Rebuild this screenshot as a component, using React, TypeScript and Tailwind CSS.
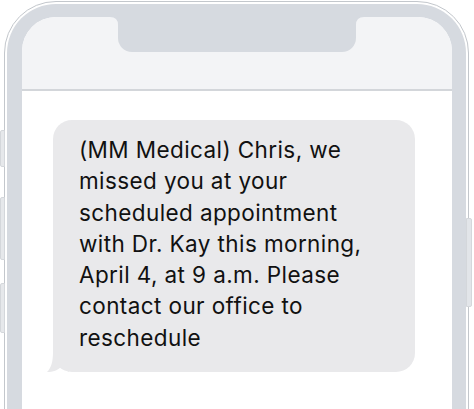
import React from "react";

const lines = [
  "(MM Medical) Chris, we",
  "missed you at your",
  "scheduled appointment",
  "with Dr. Kay this morning,",
  "April 4, at 9 a.m. Please",
  "contact our office to",
  "reschedule",
];

export default function App() {
  return (
    <div className="relative h-[409px] w-[474px] overflow-hidden bg-white" style={{ fontFamily: "Inter, 'Liberation Sans', sans-serif" }}>
      {/* side buttons */}
      <div className="absolute left-0 top-[130px] h-[37px] w-[5px] rounded-l-[2px] border border-[#d4d7db] bg-[#e6e8eb]" />
      <div className="absolute left-0 top-[197px] h-[63px] w-[5px] rounded-l-[2px] border border-[#d4d7db] bg-[#e6e8eb]" />
      <div className="absolute left-0 top-[283px] h-[50px] w-[5px] rounded-l-[2px] border border-[#d4d7db] bg-[#e6e8eb]" />
      <div className="absolute right-[2px] top-[218px] h-[89px] w-[6px] rounded-r-[2px] border border-[#d4d7db] bg-[#e2e5e9]" />

      <div className="ml-[4px] mt-[1px] flex h-[420px] w-[465px] flex-col rounded-t-[52px] border border-[#c3c7cc] bg-white p-[2px]">
        <div className="flex flex-1 flex-col rounded-t-[49px] bg-[#d6dae0] pl-[15px] pr-[14px] pt-[13px]">
          <div className="flex flex-1 flex-col overflow-hidden rounded-t-[34px] bg-white">
            {/* header */}
            <div className="relative flex h-[74px] justify-center border-b-2 border-[#d3d6da] bg-[#f3f4f6]">
              <div className="h-[35px] w-[238px] rounded-b-[14px] bg-[#d6dae0]" />
              <svg className="absolute left-[88px] top-0" width="8" height="8" viewBox="0 0 8 8">
                <path d="M0 0 H8 V8 Q8 0 0 0 Z" fill="#d6dae0" />
              </svg>
              <svg className="absolute left-[334px] top-0" width="8" height="8" viewBox="0 0 8 8">
                <path d="M8 0 H0 V8 Q0 0 8 0 Z" fill="#d6dae0" />
              </svg>
            </div>
            {/* message */}
            <div className="flex pl-[31px] pt-[29px]">
              <div className="relative w-[362px]">
                <div className="flex flex-col rounded-[19px] bg-[#e9e9eb] pb-[19px] pl-[26px] pr-[8px] pt-[14px] text-[22.5px] leading-[31.3px] tracking-[0.4px] text-[#111]">
                  {lines.map((l) => (
                    <span key={l} className="whitespace-nowrap">{l}</span>
                  ))}
                </div>
                <svg className="absolute bottom-0 left-[-6px]" width="22" height="20" viewBox="0 0 22 20">
                  <path d="M6 0 C6 10 4 16 0 20 C6 20 11 18 14 15 L22 20 L22 0 Z" fill="#e9e9eb" />
                </svg>
              </div>
            </div>
          </div>
        </div>
      </div>
    </div>
  );
}
